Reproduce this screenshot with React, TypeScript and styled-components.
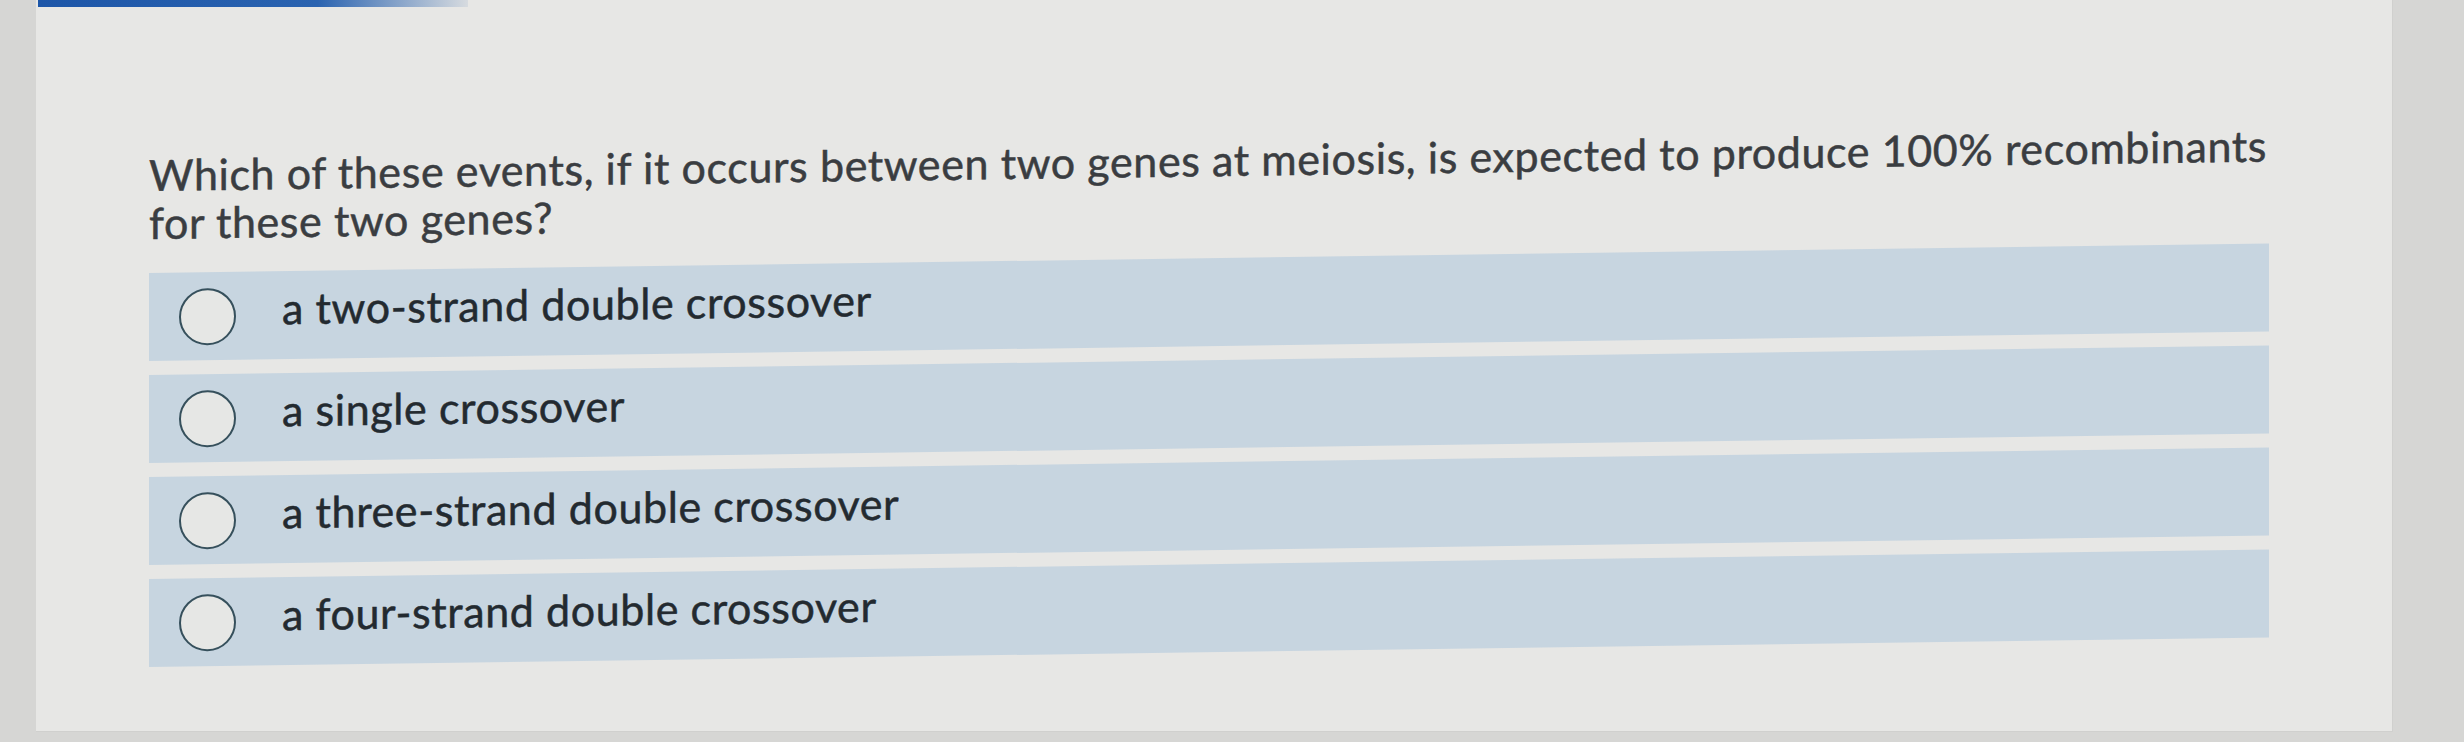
import React from "react";
import styled, { createGlobalStyle } from "styled-components";

const GlobalStyle = createGlobalStyle`
  html, body {
    margin: 0;
    padding: 0;
    background: #d6d6d4;
    overflow: hidden;
  }
  body {
    font-family: Lato, "Noto Sans", "Liberation Sans", sans-serif;
  }
`;

const Page = styled.div`
  width: 2464px;
  height: 742px;
  padding-left: 36px;
  box-sizing: border-box;
  display: flex;
  align-items: flex-start;
`;

const Card = styled.div`
  width: 2357px;
  height: 732px;
  box-sizing: border-box;
  background: #e7e7e5;
  border-right: 1px solid #d0d0ce;
  border-bottom: 1px solid #d0d0ce;
  display: flex;
  flex-direction: column;
  overflow: hidden;
`;

const TopBar = styled.div`
  width: 430px;
  height: 7px;
  margin-left: 2px;
  background: linear-gradient(90deg, #1d56a8 0%, #2a63b0 65%, rgba(120, 150, 190, 0.15) 100%);
`;

const Content = styled.div`
  width: 2120px;
  margin-left: 113px;
  margin-top: 144px;
  display: flex;
  flex-direction: column;
  transform: skewY(-0.8deg);
  transform-origin: 0 0;
`;

const Question = styled.p`
  margin: 0;
  font-family: Lato, "Noto Sans", "Liberation Sans", sans-serif;
  font-size: 43px;
  line-height: 48px;
  letter-spacing: 0.6px;
  color: #3a3d41;
  -webkit-text-stroke: 0.5px #3a3d41;
  white-space: nowrap;
`;

const Options = styled.div`
  margin-top: 26px;
  display: flex;
  flex-direction: column;
  gap: 14px;
`;

const Row = styled.label`
  height: 88px;
  background: #c7d5e0;
  display: flex;
  align-items: center;
  padding-left: 30px;
  gap: 46px;
  cursor: pointer;
`;

const Radio = styled.span`
  width: 57px;
  height: 57px;
  box-sizing: border-box;
  border-radius: 50%;
  border: 2.5px solid #36505c;
  background: #e6e7e5;
  flex: none;
`;

const OptionText = styled.span`
  font-family: Lato, "Noto Sans", "Liberation Sans", sans-serif;
  font-size: 43px;
  line-height: 48px;
  letter-spacing: 0.6px;
  margin-bottom: 14px;
  color: #232a30;
  -webkit-text-stroke: 0.5px #232a30;
`;

const options = [
  "a two-strand double crossover",
  "a single crossover",
  "a three-strand double crossover",
  "a four-strand double crossover",
];

export default function App() {
  return (
    <>
      <GlobalStyle />
      <Page>
        <Card>
          <TopBar />
          <Content>
            <Question>
              Which of these events, if it occurs between two genes at meiosis, is expected to produce 100% recombinants
              <br />
              for these two genes?
            </Question>
            <Options>
              {options.map((o) => (
                <Row key={o}>
                  <Radio />
                  <OptionText>{o}</OptionText>
                </Row>
              ))}
            </Options>
          </Content>
        </Card>
      </Page>
    </>
  );
}
